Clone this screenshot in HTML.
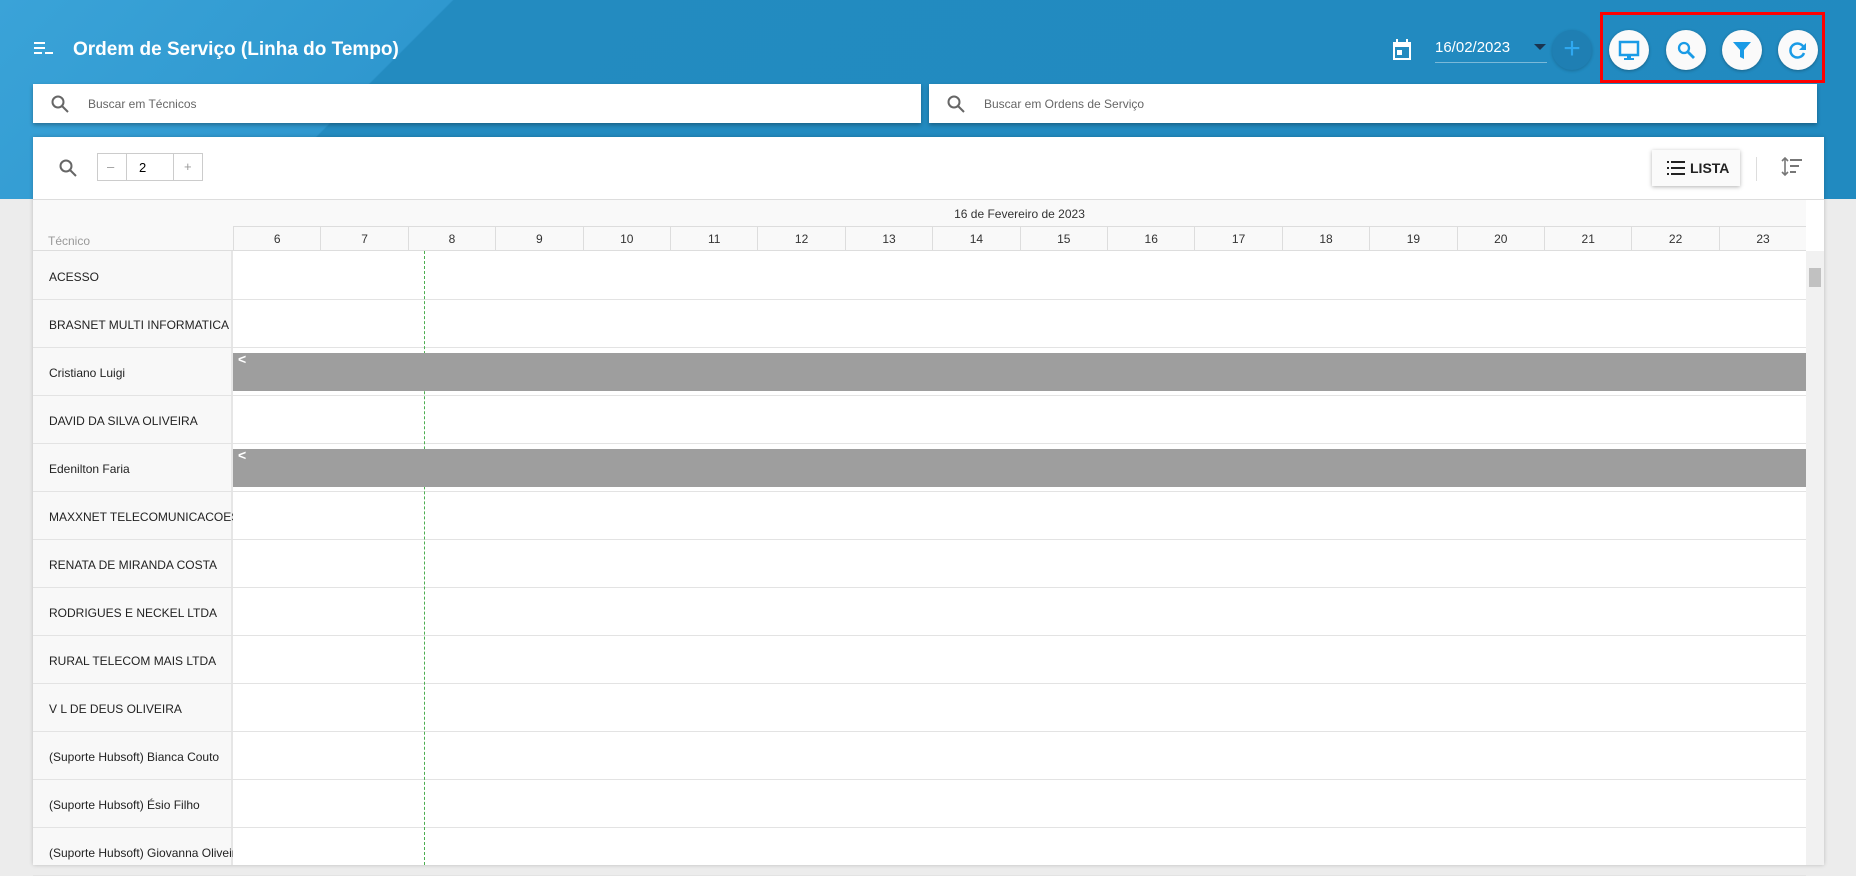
<!DOCTYPE html>
<html><head><meta charset="utf-8"><style>
*{box-sizing:border-box;margin:0;padding:0}
body{width:1856px;height:865px;overflow:hidden;background:#ececec;font-family:"Liberation Sans",sans-serif;position:relative}
.hdr{position:absolute;left:0;top:0;width:1856px;height:199px;background:linear-gradient(135deg,#3aa3d8 0,#2f98cf 22%,#238bc0 22.1%,#218ac0 100%)}
.title{position:absolute;left:73px;top:39px;color:#fff;font-size:19px;font-weight:bold}
.srch{position:absolute;top:84px;height:39px;background:#fff;box-shadow:0 2px 4px rgba(0,0,0,.3);font-size:12px;color:#666}
.srch span{position:absolute;left:55px;top:13px}
.card{position:absolute;left:33px;top:137px;width:1791px;height:728px;background:#fff;box-shadow:0 0 4px rgba(0,0,0,.2)}
.circ{position:absolute;top:30px;width:40px;height:40px;border-radius:50%;background:#fafafa;box-shadow:0 1px 3px rgba(0,0,0,.3)}
.circ svg{position:absolute;left:9px;top:9px}
.ab{position:absolute}
.lbl{position:absolute;left:16px;font-size:12px;color:#222;white-space:nowrap;overflow:hidden;width:184px}
</style></head><body>
<div class="hdr"></div>
<svg class="ab" style="left:34px;top:42px" width="20" height="14"><rect x="0" y="0" width="11" height="2" fill="#fff"/><rect x="0" y="5" width="11" height="2" fill="#fff"/><rect x="0" y="10" width="8" height="2" fill="#fff"/><rect x="11" y="10" width="8" height="2" fill="#fff"/></svg>
<div class="title">Ordem de Serviço (Linha do Tempo)</div>
<svg class="ab" style="left:1392px;top:39px" width="20" height="22" viewBox="0 0 20 22"><rect x="1" y="3" width="18" height="18" fill="#fff"/><rect x="3" y="8" width="14" height="11" fill="#238bc0"/><rect x="5" y="11" width="5" height="5" fill="#fff"/><rect x="4" y="0" width="2" height="4" fill="#fff"/><rect x="14" y="0" width="2" height="4" fill="#fff"/></svg>
<div class="ab" style="left:1435px;top:39px;color:#fff;font-size:15px">16/02/2023</div>
<div class="ab" style="left:1435px;top:62px;width:112px;height:1px;background:rgba(255,255,255,.4)"></div>
<div class="ab" style="left:1534px;top:44px;border:6px solid transparent;border-top:6px solid #1a3550"></div>
<div class="ab" style="left:1552px;top:30px;width:40px;height:40px;border-radius:50%;background:#1f7fb3;box-shadow:0 1px 3px rgba(0,0,0,.2);color:#2fa8f0;font-size:30px;line-height:38px;text-align:center">+</div>
<div class="ab" style="left:1600px;top:12px;width:225px;height:71px;border:3px solid #f00"></div>
<div class="circ" style="left:1609px"><svg width="22" height="22" viewBox="0 0 22 22"><rect x="2" y="3" width="18" height="13" fill="none" stroke="#1a9be6" stroke-width="2.5"/><rect x="9" y="16" width="4" height="3" fill="#1a9be6"/><rect x="6" y="19" width="10" height="2" fill="#1a9be6"/></svg></div>
<div class="circ" style="left:1666px"><svg width="22" height="22" viewBox="0 0 22 22"><circle cx="9" cy="9" r="5" fill="none" stroke="#1a9be6" stroke-width="2.3"/><path d="M13 13l6 6" stroke="#1a9be6" stroke-width="2.8"/></svg></div>
<div class="circ" style="left:1722px"><svg width="22" height="22" viewBox="0 0 22 22"><path d="M2 3h18l-7 8v9l-4-2v-7z" fill="#1a9be6"/></svg></div>
<div class="circ" style="left:1778px"><svg width="22" height="22" viewBox="0 0 22 22"><path d="M17 9a7 7 0 1 0 0 5" fill="none" stroke="#1a9be6" stroke-width="2.5"/><path d="M19 4v7h-7z" fill="#1a9be6"/></svg></div>
<div class="srch" style="left:33px;width:888px"><svg class="ab" style="left:17px;top:10px" width="20" height="20"><circle cx="8" cy="8" r="5.5" fill="none" stroke="#666" stroke-width="2"/><path d="M12 12l6 6" stroke="#666" stroke-width="2"/></svg><span>Buscar em Técnicos</span></div>
<div class="srch" style="left:929px;width:888px"><svg class="ab" style="left:17px;top:10px" width="20" height="20"><circle cx="8" cy="8" r="5.5" fill="none" stroke="#666" stroke-width="2"/><path d="M12 12l6 6" stroke="#666" stroke-width="2"/></svg><span>Buscar em Ordens de Serviço</span></div>
<div class="card">
<svg class="ab" style="left:25px;top:21px" width="20" height="20"><circle cx="8" cy="8" r="5.5" fill="none" stroke="#666" stroke-width="2"/><path d="M12 12l6 6" stroke="#666" stroke-width="2"/></svg>
<div class="ab" style="left:64px;top:16px;width:106px;height:28px;border:1px solid #ccc;font-size:13px"><span class="ab" style="left:9px;top:5px;color:#999">–</span><div class="ab" style="left:28px;top:0;width:1px;height:26px;background:#ccc"></div><span class="ab" style="left:41px;top:6px">2</span><div class="ab" style="left:75px;top:0;width:1px;height:26px;background:#ccc"></div><span class="ab" style="left:86px;top:5px;color:#999">+</span></div>
<div class="ab" style="left:1619px;top:13px;width:88px;height:36px;background:#fafafa;box-shadow:0 1px 4px rgba(0,0,0,.3);font-size:14px;font-weight:bold;color:#222"><svg class="ab" style="left:15px;top:11px" width="20" height="14"><rect x="0" y="0" width="2" height="2" fill="#222"/><rect x="0" y="6" width="2" height="2" fill="#222"/><rect x="0" y="12" width="2" height="2" fill="#222"/><rect x="4" y="0" width="14" height="2" fill="#222"/><rect x="4" y="6" width="14" height="2" fill="#222"/><rect x="4" y="12" width="14" height="2" fill="#222"/></svg><span class="ab" style="left:38px;top:10px">LISTA</span></div>
<div class="ab" style="left:1723px;top:20px;width:1px;height:24px;background:#ddd"></div>
<svg class="ab" style="left:1748px;top:20px" width="22" height="20"><path d="M4 1v17M1 4l3-3 3 3M1 15l3 3 3-3" fill="none" stroke="#777" stroke-width="1.6"/><rect x="9" y="2" width="12" height="2" fill="#777"/><rect x="9" y="8" width="9" height="2" fill="#777"/><rect x="9" y="14" width="6" height="2" fill="#777"/></svg>
<div class="ab" style="left:0;top:62px;width:1791px;height:1px;background:#ddd"></div>
<div class="ab" style="left:0;top:63px;width:1773px;height:51px;background:#f9f9f9"></div>
<div class="ab" style="left:0;top:70px;width:1773px;text-align:center;padding-left:200px;font-size:12px;color:#333">16 de Fevereiro de 2023</div>
<div class="ab" style="left:200px;top:89px;width:1573px;height:1px;background:#ddd"></div>
<div class="ab" style="left:15px;top:97px;font-size:12px;color:#999">Técnico</div>
<div id="hrs"></div>
<div class="ab" style="left:0;top:113px;width:1773px;height:1px;background:#ddd"></div>
<div class="ab" style="left:0;top:114px;width:200px;height:614px;background:#f8f8f8;border-right:2px solid #e6e6e6"></div>
<div id="rows"></div>
<div class="ab" style="left:391px;top:114px;width:0;height:614px;border-left:1px dashed #4caf50"></div>
<div class="ab" style="left:200px;top:216px;width:1573px;height:38px;background:#9e9e9e"></div>
<div class="ab" style="left:205px;top:214px;color:#fff;font-weight:bold;font-size:14px">&lt;</div>
<div class="ab" style="left:200px;top:312px;width:1573px;height:38px;background:#9e9e9e"></div>
<div class="ab" style="left:205px;top:310px;color:#fff;font-weight:bold;font-size:14px">&lt;</div>
<div class="ab" style="left:1773px;top:114px;width:18px;height:614px;background:#f1f1f1"></div>
<div class="ab" style="left:1776px;top:131px;width:12px;height:19px;background:#c1c1c1"></div>
</div>
<script>
var h='';for(var i=0;i<18;i++){var x=200+i*87.4;h+='<div class="ab" style="left:'+x+'px;top:90px;width:87.4px;height:23px;border-left:1px solid #ddd;text-align:center;font-size:12px;color:#333;line-height:25px">'+(6+i)+'</div>';}
document.getElementById('hrs').innerHTML=h;
var n=['ACESSO','BRASNET MULTI INFORMATICA','Cristiano Luigi','DAVID DA SILVA OLIVEIRA','Edenilton Faria','MAXXNET TELECOMUNICACOES','RENATA DE MIRANDA COSTA','RODRIGUES E NECKEL LTDA','RURAL TELECOM MAIS LTDA','V L DE DEUS OLIVEIRA','(Suporte Hubsoft) Bianca Couto','(Suporte Hubsoft) Ésio Filho','(Suporte Hubsoft) Giovanna Oliveira'];
var r='';for(var j=0;j<n.length;j++){var y=114+j*48;r+='<div class="lbl" style="top:'+(y+19)+'px">'+n[j]+'</div><div class="ab" style="left:0;top:'+(y+48)+'px;width:1773px;height:1px;background:#e3e3e3"></div>';}
document.getElementById('rows').innerHTML=r;
</script>
</body></html>
